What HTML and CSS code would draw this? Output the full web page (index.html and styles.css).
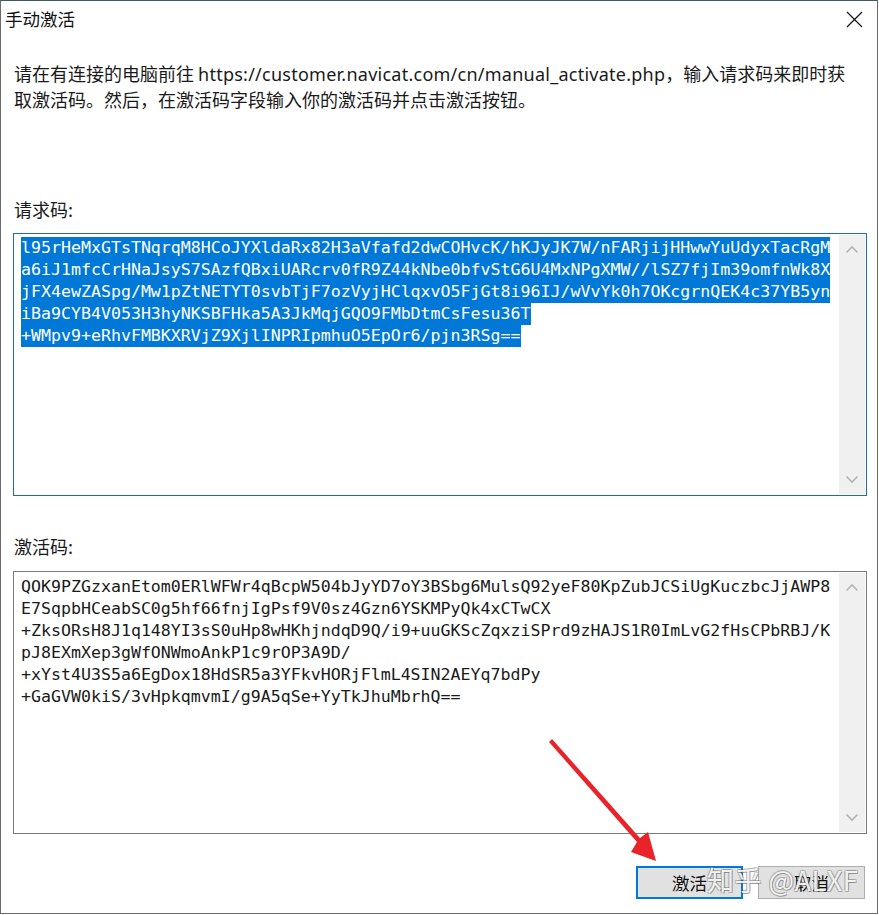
FILE: index.html
```html
<!DOCTYPE html>
<html lang="zh-CN">
<head>
<meta charset="utf-8">
<title>手动激活</title>
<link rel="stylesheet" href="styles.css">
</head>
<body>
<div class="window">
  <div class="titlebar">
    <span class="title">手动激活</span>
    <svg class="close" width="17" height="17" viewBox="0 0 17 17"><path d="M1 1 L16 16 M16 1 L1 16" stroke="#111" stroke-width="1.2" fill="none"/></svg>
  </div>
  <div class="desc">
    <div class="line">请在有连接的电脑前往 <span class="latin">https://customer.navicat.com/cn/manual_activate.php</span>，输入请求码来即时获</div>
    <div class="line">取激活码。然后，在激活码字段输入你的激活码并点击激活按钮。</div>
  </div>
  <div class="label label-req">请求码:</div>
  <div class="box box-focus">
    <div class="code">
      <div class="sel">l95rHeMxGTsTNqrqM8HCoJYXldaRx82H3aVfafd2dwCOHvcK/hKJyJK7W/nFARjijHHwwYuUdyxTacRgM</div>
      <div class="sel">a6iJ1mfcCrHNaJsyS7SAzfQBxiUARcrv0fR9Z44kNbe0bfvStG6U4MxNPgXMW//lSZ7fjIm39omfnWk8X</div>
      <div class="sel">jFX4ewZASpg/Mw1pZtNETYT0svbTjF7ozVyjHClqxvO5FjGt8i96IJ/wVvYk0h7OKcgrnQEK4c37YB5yn</div>
      <div class="sel">iBa9CYB4V053H3hyNKSBFHka5A3JkMqjGQO9FMbDtmCsFesu36T</div>
      <div class="sel">+WMpv9+eRhvFMBKXRVjZ9XjlINPRIpmhuO5EpOr6/pjn3RSg==</div>
    </div>
    <div class="scroll">
      <svg width="14" height="9" viewBox="0 0 14 9"><path d="M1.5 7.5 L7 2 L12.5 7.5" stroke="#b4b4b4" stroke-width="1.6" fill="none"/></svg>
      <svg width="14" height="9" viewBox="0 0 14 9"><path d="M1.5 1.5 L7 7 L12.5 1.5" stroke="#b4b4b4" stroke-width="1.6" fill="none"/></svg>
    </div>
  </div>
  <div class="label label-act">激活码:</div>
  <div class="box box-plain">
    <div class="code">
      <div class="ln">QOK9PZGzxanEtom0ERlWFWr4qBcpW504bJyYD7oY3BSbg6MulsQ92yeF80KpZubJCSiUgKuczbcJjAWP8</div>
      <div class="ln">E7SqpbHCeabSC0g5hf66fnjIgPsf9V0sz4Gzn6YSKMPyQk4xCTwCX</div>
      <div class="ln">+ZksORsH8J1q148YI3sS0uHp8wHKhjndqD9Q/i9+uuGKScZqxziSPrd9zHAJS1R0ImLvG2fHsCPbRBJ/K</div>
      <div class="ln">pJ8EXmXep3gWfONWmoAnkP1c9rOP3A9D/</div>
      <div class="ln">+xYst4U3S5a6EgDox18HdSR5a3YFkvHORjFlmL4SIN2AEYq7bdPy</div>
      <div class="ln">+GaGVW0kiS/3vHpkqmvmI/g9A5qSe+YyTkJhuMbrhQ==</div>
    </div>
    <div class="scroll">
      <svg width="14" height="9" viewBox="0 0 14 9"><path d="M1.5 7.5 L7 2 L12.5 7.5" stroke="#b4b4b4" stroke-width="1.6" fill="none"/></svg>
      <svg width="14" height="9" viewBox="0 0 14 9"><path d="M1.5 1.5 L7 7 L12.5 1.5" stroke="#b4b4b4" stroke-width="1.6" fill="none"/></svg>
    </div>
  </div>
  <div class="buttons">
    <div class="btn btn-default">激活</div>
    <div class="btn">取消</div>
  </div>
  <svg class="arrow" width="130" height="140" viewBox="540 730 130 140">
    <polygon points="549,742 552,739 640,838 648,832 656,861 631,852 637,842" fill="#e8232a"/>
  </svg>
  <div class="watermark">知乎 @ALXF</div>
</div>
</body>
</html>
```
FILE: styles.css
```css
html, body {
  margin: 0;
  padding: 0;
  background: #ffffff;
}
body {
  font-family: "Noto Sans", "Noto Sans CJK SC", sans-serif;
  color: #1a1a1a;
}
.window {
  position: relative;
  box-sizing: border-box;
  width: 878px;
  height: 914px;
  border: 1px solid #6b6b6b;
  border-top-color: #3d5a63;
  background: #ffffff;
  display: flex;
  flex-direction: column;
}
.titlebar {
  height: 36px;
  display: flex;
  align-items: center;
  justify-content: space-between;
  padding: 0 14px 0 4px;
}
.title {
  font-family: "Noto Sans CJK SC", sans-serif;
  font-size: 17.5px;
  color: #111;
  margin-top: -1px;
}
.desc {
  margin-top: 24px;
  padding-left: 13px;
  font-family: "Noto Sans CJK SC", sans-serif;
  font-size: 18px;
  line-height: 25px;
  color: #1a1a1a;
}
.line {
  white-space: nowrap;
}
.latin {
  font-family: "Noto Sans", sans-serif;
  letter-spacing: 0.25px;
}
.label {
  padding-left: 13px;
  font-family: "Noto Sans CJK SC", sans-serif;
  font-size: 18px;
  line-height: 25px;
  color: #1a1a1a;
}
.label-req {
  margin-top: 85px;
}
.label-act {
  margin-top: 38px;
}
.box {
  box-sizing: border-box;
  margin-left: 12px;
  width: 854px;
  height: 263px;
  display: flex;
  justify-content: space-between;
  background: #fff;
}
.box-focus {
  margin-top: 11px;
  border: 1px solid #1b6cb5;
}
.box-plain {
  margin-top: 12px;
  border: 1px solid #7a7a7a;
}
.code {
  padding: 3px 0 0 7px;
  display: flex;
  flex-direction: column;
  align-items: flex-start;
  font-family: "DejaVu Sans Mono", monospace;
  font-size: 16.6px;
  color: #1a1a1a;
}
.box-plain .code {
  padding-top: 4px;
}
.sel, .ln {
  height: 22px;
  line-height: 22px;
  white-space: pre;
}
.sel {
  background: #0078d7;
  color: #ffffff;
}
.scroll {
  width: 26px;
  margin: 1px 1px 1px 0;
  background: #f0f0f0;
  display: flex;
  flex-direction: column;
  justify-content: space-between;
  align-items: center;
  padding: 10px 0 10px;
}
.buttons {
  margin-top: 32px;
  display: flex;
  justify-content: flex-end;
  gap: 15px;
  padding-right: 12px;
}
.btn {
  box-sizing: border-box;
  width: 107px;
  height: 33px;
  background: #e1e1e1;
  border: 1px solid #adadad;
  display: flex;
  align-items: center;
  justify-content: center;
  font-family: "Noto Sans CJK SC", sans-serif;
  font-size: 17.5px;
  color: #111;
}
.btn-default {
  border: 2px solid #0078d7;
}
.arrow {
  position: absolute;
  left: 539px;
  top: 729px;
}
.watermark {
  position: absolute;
  left: 706px;
  top: 862px;
  font-family: "Noto Sans CJK SC", sans-serif;
  font-size: 27px;
  line-height: 34px;
  color: rgba(255, 255, 255, 0.9);
  text-shadow: 1px 1px 0 rgba(90, 90, 90, 0.45), -1px -1px 0 rgba(90, 90, 90, 0.3), 1px -1px 0 rgba(90, 90, 90, 0.3), -1px 1px 0 rgba(90, 90, 90, 0.3);
  letter-spacing: 0.5px;
  white-space: nowrap;
}
```
